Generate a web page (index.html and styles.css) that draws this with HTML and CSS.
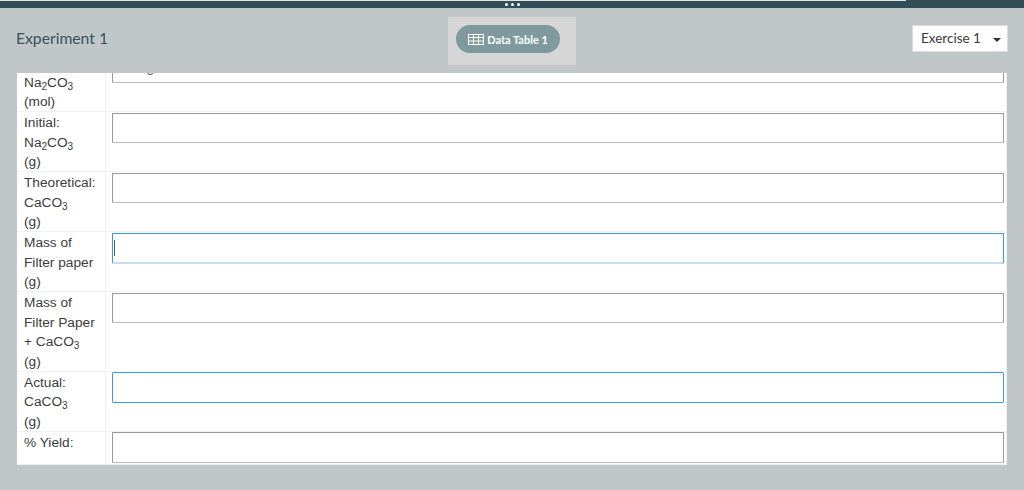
FILE: index.html
```html
<!DOCTYPE html>
<html lang="en">
<head>
<meta charset="utf-8">
<title>Experiment 1</title>
<link rel="stylesheet" href="styles.css">
</head>
<body>
<div class="topbar"><div class="strip"></div><span class="dots"><i></i><i></i><i></i></span></div>
<header class="header">
  <h1 class="title">Experiment 1</h1>
  <div class="tab-wrap">
    <button class="tab">
      <svg class="tab-icon" width="16" height="11" viewBox="0 0 16 11" fill="none" stroke="#fff" stroke-width="1"><rect x="0.5" y="0.5" width="15" height="10"/><path d="M0.5 3.5H15.5M0.5 7H15.5M5.5 0.5V10.5M10.5 0.5V10.5"/></svg>
      Data Table 1
    </button>
  </div>
  <div class="select">Exercise 1 <span class="caret"></span></div>
</header>
<main class="panel">
  <div class="sheet">
    <div class="row"><div class="label">Moles:<br>Na<sub>2</sub>CO<sub>3</sub><br>(mol)</div><div class="field"><div class="input value">0.5 g</div></div></div>
    <div class="row"><div class="label">Initial:<br>Na<sub>2</sub>CO<sub>3</sub><br>(g)</div><div class="field"><div class="input"></div></div></div>
    <div class="row"><div class="label">Theoretical:<br>CaCO<sub>3</sub><br>(g)</div><div class="field"><div class="input"></div></div></div>
    <div class="row"><div class="label">Mass of<br>Filter paper<br>(g)</div><div class="field"><div class="input focus"><span class="cursor"></span></div></div></div>
    <div class="row"><div class="label">Mass of<br>Filter Paper<br>+ CaCO<sub>3</sub><br>(g)</div><div class="field"><div class="input"></div></div></div>
    <div class="row"><div class="label">Actual:<br>CaCO<sub>3</sub><br>(g)</div><div class="field"><div class="input active tall"></div></div></div>
    <div class="row last"><div class="label">% Yield:</div><div class="field"><div class="input tall"></div></div></div>
  </div>
</main>
</body>
</html>
```
FILE: styles.css
```css
* { box-sizing: border-box; }
html, body { margin: 0; height: 490px; overflow: hidden; }
body { background: #c1c7c9; font-family: "Liberation Sans", Arial, sans-serif; color: #333; }
.topbar { height: 8px; background: #324f57; display: flex; flex-direction: column; align-items: center; }
.strip { width: 100%; height: 1px; background: linear-gradient(to right, #e4e6e6 906px, #324f57 906px); }
.dots { display: flex; gap: 3px; margin-top: 2px; }
.dots i { width: 3px; height: 3px; border-radius: 50%; background: #fff; }
.header { height: 65px; padding: 0 16px; display: grid; grid-template-columns: 1fr auto 1fr; align-items: center; }
.title { margin: 0 0 5px; font: 400 15.7px "Lato", sans-serif; color: #36525a; }
.tab-wrap { width: 128px; height: 48px; margin-top: 1px; padding: 0 0 4px 8px; background: #d6d6d6; display: flex; align-items: center; justify-content: flex-start; }
.tab { width: 104px; height: 28px; border: 0; border-radius: 14px; background: #7f9a9f; color: #fff; font: 700 11px "Lato", sans-serif; display: flex; align-items: center; justify-content: center; gap: 3px; padding: 0; }
.select { justify-self: end; width: 96px; height: 27px; margin-top: -4px; background: #fff; border: 1px solid #d8dcdd; color: #3a3a3a; font: 400 13.5px/24px "Lato", sans-serif; padding-left: 8px; position: relative; }
.caret { position: absolute; right: 6px; top: 12px; border: 4.5px solid transparent; border-top-color: #333; border-bottom: 0; }
.panel { margin-left: 17px; width: 990px; height: 392px; overflow: hidden; background: #fff; box-shadow: inset -1px -1px 0 #eef0f0; }
.sheet { margin-top: -21.7px; }
.row { display: flex; align-items: flex-start; border-top: 1px solid #f0f1f1; }
.label { width: 88px; padding: 0.6px 0 0 7px; margin-bottom: -0.6px; font-size: 13.7px; line-height: 19.67px; color: #3c3c3c; }
.label sub { font-size: 10px; line-height: 0; vertical-align: -3px; }
.field { flex: 1; align-self: stretch; border-left: 1px solid #f0f1f1; padding: 1px 3px 0 6px; }
.last { height: 34px; }
.input { height: 30px; background: #fff; border: 1px solid #999; border-bottom-color: #bdbdbd; font-size: 13.5px; line-height: 28px; padding-left: 5px; color: #555; border-radius: 1px; position: relative; }
.value { padding-left: 11px; }
.focus { border-color: #3a9bdc; border-bottom: 2px solid #c6e0f2; height: 31px; }
.cursor { display: block; position: absolute; left: 1px; top: 6px; width: 1px; height: 16px; background: #4a6a80; }
.active { border-color: #3a9fe0; }
.tall { height: 31px; margin-top: -1px; }
```
